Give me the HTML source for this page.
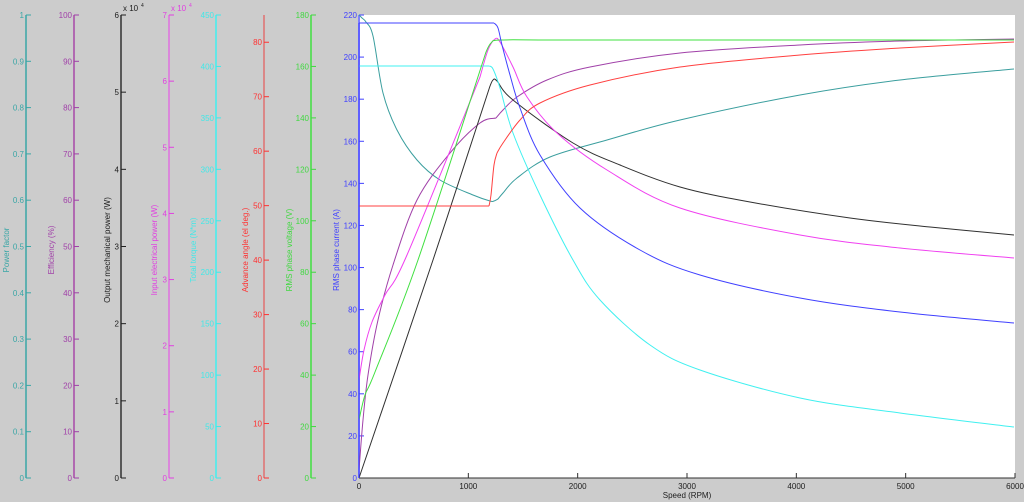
<!DOCTYPE html>
<html><head><meta charset="utf-8"><style>
html,body{margin:0;padding:0;background:#cccccc;}
svg{display:block;font-family:"Liberation Sans",Arial,sans-serif;}
</style></head><body>
<svg id="s" width="1024" height="502" xmlns="http://www.w3.org/2000/svg">
<rect width="1024" height="502" fill="#cccccc"/>
<rect x="359" y="15" width="656" height="463" fill="#ffffff"/>
<g id="ax"></g>
<g id="cv" fill="none" stroke-width="1"></g>
</svg>
<script>
var NS="http://www.w3.org/2000/svg";
var ax=document.getElementById('ax'),cv=document.getElementById('cv');
function el(p,t,a,txt){var e=document.createElementNS(NS,t);for(var k in a)e.setAttribute(k,a[k]);if(txt!=null)e.textContent=txt;p.appendChild(e);return e;}
var T=15,B=478;
var axes=[
 {x:26,max:1,step:0.1,c:"#3aa6a6",lc:"#3aa6a6",dec:1,lab:"Power factor",lx:6},
 {x:74,max:100,step:10,c:"#a848a8",lc:"#a040a8",lab:"Efficiency (%)",lx:51},
 {x:121,max:6,step:1,c:"#303030",lc:"#202020",lab:"Output mechanical power (W)",lx:107,mul:1},
 {x:169,max:7,step:1,c:"#e070e0",lc:"#e040e0",lab:"Input electrical power (W)",lx:154,mul:1},
 {x:216,max:450,step:50,c:"#40f0f0",lc:"#40e8e8",lab:"Total torque (N*m)",lx:193},
 {x:264,max:85,step:10,c:"#e07070",lc:"#ff3030",lab:"Advance angle (el deg.)",lx:245,top:80},
 {x:311,max:180,step:20,c:"#40e040",lc:"#40d840",lab:"RMS phase voltage (V)",lx:289},
 {x:359,max:220,step:20,c:"#8080ff",lc:"#4040ff",lab:"RMS phase current (A)",lx:336}
];
axes.forEach(function(a){
 el(ax,'line',{x1:a.x,y1:T,x2:a.x,y2:B,stroke:a.c,'stroke-width':a.x==359?2:1.5});
 var top=a.top||a.max;
 for(var v=0;v<=top+1e-9;v+=a.step){
  var y=B-(v/a.max)*(B-T);
  el(ax,'line',{x1:a.x,y1:y,x2:a.x+5,y2:y,stroke:a.lc,'stroke-width':1});
  var s=a.dec?(Math.round(v*10)/10).toString():Math.round(v).toString();
  el(ax,'text',{x:a.x-2,y:y+3,'font-size':8,fill:a.lc,'text-anchor':'end'},s);
 }
 el(ax,'text',{x:a.lx,y:250,'font-size':8,fill:a.lc,'text-anchor':'middle',transform:'rotate(-90 '+a.lx+' 250)',dy:3},a.lab);
 if(a.mul){el(ax,'text',{x:a.x+2,y:11,'font-size':8,fill:a.lc},'x 10');el(ax,'text',{x:a.x+20,y:7,'font-size':5,fill:a.lc},'4');}
});
el(ax,'line',{x1:359,y1:478,x2:1015,y2:478,stroke:'#303030','stroke-width':1});
for(var i=0;i<=6;i++){var x=359+i*656/6;
 el(ax,'line',{x1:x,y1:478,x2:x,y2:473,stroke:'#303030'});
 el(ax,'text',{x:x,y:489,'font-size':8,fill:'#202020','text-anchor':'middle'},String(i*1000));}
el(ax,'text',{x:687,y:498,'font-size':8,fill:'#202020','text-anchor':'middle'},'Speed (RPM)');

function cr(pts){
 var d="M"+pts[0][0]+","+pts[0][1];
 for(var i=0;i<pts.length-1;i++){
  var p0=pts[i>0?i-1:i],p1=pts[i],p2=pts[i+1],p3=pts[i+2<pts.length?i+2:i+1];
  var c1=[p1[0]+(p2[0]-p0[0])/6,p1[1]+(p2[1]-p0[1])/6],c2=[p2[0]-(p3[0]-p1[0])/6,p2[1]-(p3[1]-p1[1])/6];
  d+=" C"+c1.join(",")+" "+c2.join(",")+" "+p2.join(",");
 }
 return d;
}
var curves=[
 ["#3a9e9e",[[[359,15],[362,18],[366,22],[373,36],[383,93],[397,130],[417,160],[440,180],[473,195],[490,201],[494,201],[498,199]],[[498,199],[503,193],[517,178],[550,157],[607,140],[680,120],[800,95],[900,80],[1014,69]]]],
 ["#a040a8",[[[359,470],[363,420],[368,375],[378,320],[393,265],[417,200],[450,153],[480,123],[496,118]],[[496,118],[503,110],[517,97],[547,80],[590,67],[680,53],[800,45],[900,41],[1014,39]]]],
 ["#303030",[[[359,478],[433,260],[490,86]],[[490,86],[493,80],[497,81],[513,100],[573,143],[620,165],[680,187],[750,202],[850,218],[930,227],[1014,235]]]],
 ["#f040f0",[[[359,380],[364,350],[372,322],[385,295],[407,255],[480,77]],[[480,77],[488,50],[495,39],[500,42],[513,67],[527,97],[557,133],[607,170],[680,208],[800,235],[900,248],[1014,258]]]],
 ["#40f0f0",[[[359,478],[359,66]],[[359,66],[489,66]],[[489,66],[493,69],[500,88],[513,133],[540,195],[573,260],[600,300],[650,345],[700,370],[800,398],[900,413],[1014,427]]]],
 ["#ff4040",[[[359,206],[489,206]],[[489,206],[491,195],[494,165],[497,153]],[[497,153],[503,143],[520,120],[540,103],[590,85],[680,67],[800,55],[900,48],[1014,42]]]],
 ["#40e040",[[[359,420],[365,395],[375,372],[418,260],[486,52]],[[486,52],[491,43],[500,40],[550,40],[650,40]],[[650,40],[1014,40]]]],
 ["#4040ff",[[[359,478],[359,23]],[[359,23],[494,23]],[[494,23],[498,28],[502,45],[510,75],[520,108],[540,155],[580,208],[640,250],[700,275],[800,298],[900,312],[1014,323]]]]
];
curves.forEach(function(c){
 var d=c[1].map(cr).join(" ");
 el(cv,'path',{d:d,stroke:c[0]});
});
</script>
</body></html>
